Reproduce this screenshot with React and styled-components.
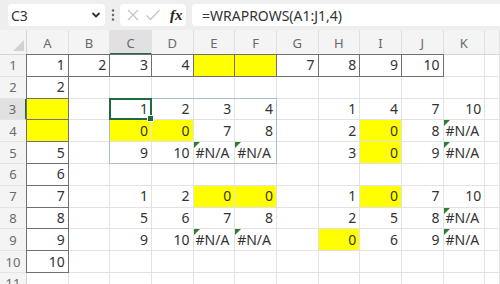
import React from 'react';
import styled, { createGlobalStyle } from 'styled-components';

const GlobalStyle = createGlobalStyle`
  html, body {
    margin: 0;
    padding: 0;
    overflow: hidden;
    background: #ffffff;
    font-family: "Noto Sans", "Liberation Sans", sans-serif;
  }
`;

const Page = styled.div`
  width: 500px;
  height: 284px;
  overflow: hidden;
  display: flex;
  flex-direction: column;
`;

const Toolbar = styled.div`
  height: 30px;
  flex: none;
  background: #eeeeee;
  display: flex;
  align-items: center;
  padding: 0 0 0 8px;
`;

const NameBox = styled.div`
  width: 97px;
  height: 22px;
  background: #ffffff;
  border-radius: 4px;
  display: flex;
  align-items: center;
  justify-content: space-between;
  padding: 0 4px 0 3px;
  box-sizing: border-box;
  font-size: 14px;
  color: #333;
`;

const Dots = styled.div`
  width: 15px;
  display: flex;
  justify-content: center;
`;

const FxBox = styled.div`
  width: 66px;
  height: 22px;
  background: #ffffff;
  border-radius: 4px;
  display: flex;
  align-items: center;
  padding: 0 0 0 6px;
  box-sizing: border-box;
  gap: 5px;
  margin-right: 6px;
`;

const Fx = styled.span`
  font-family: "Liberation Serif", serif;
  font-style: italic;
  font-size: 15px;
  color: #222;
  font-weight: bold;
  margin-left: 4px;
`;

const FormulaBox = styled.div`
  flex: 1;
  height: 22px;
  background: #ffffff;
  border-radius: 4px 0 0 4px;
  display: flex;
  align-items: center;
  padding-left: 10px;
  font-size: 14px;
  color: #333;
`;

const Sheet = styled.div`
  display: grid;
  grid-template-columns: 27px repeat(11, 41.67px) 1fr;
  grid-template-rows: 25px repeat(11, 21.8px);
  background: #fff;
`;

const Corner = styled.div`
  grid-row: 1;
  grid-column: 1;
  background: #f4f4f4;
  border-bottom: 1px solid #d4d4d4;
  border-right: 1px solid #d4d4d4;
  box-sizing: border-box;
  display: flex;
  align-items: flex-end;
  justify-content: flex-end;
  padding: 0 2px 3px 0;
`;

const ColHead = styled.div`
  grid-row: 1;
  grid-column: ${p => p.$col};
  background: ${p => (p.$active ? '#e1e1e1' : '#f4f4f4')};
  border-right: 1px solid #e0e0e0;
  border-bottom: ${p => (p.$active ? '2px solid #1e6b41' : '1px solid #d4d4d4')};
  box-sizing: border-box;
  display: flex;
  align-items: center;
  justify-content: center;
  font-size: 13px;
  color: #6a6a6a;
  padding-top: 2px;
`;

const RowHead = styled.div`
  grid-row: ${p => p.$row};
  grid-column: 1;
  background: ${p => (p.$active ? '#e1e1e1' : '#f4f4f4')};
  border-right: ${p => (p.$active ? '2px solid #1e6b41' : '1px solid #d4d4d4')};
  border-bottom: 1px solid #e4e4e4;
  box-sizing: border-box;
  display: flex;
  align-items: center;
  justify-content: center;
  font-size: 13px;
  color: #6a6a6a;
`;

const Cell = styled.div`
  grid-row: ${p => p.$row};
  grid-column: ${p => p.$col};
  position: relative;
  background: ${p => (p.$yellow ? '#ffff00' : '#ffffff')};
  border-right: 1px solid #e3e3e3;
  border-bottom: 1px solid #e3e3e3;
  box-sizing: border-box;
  display: flex;
  align-items: center;
  justify-content: ${p => (p.$error ? 'center' : 'flex-end')};
  padding: 0 3px 1px 0;
  font-size: 14px;
  color: #333;

  &::after {
    content: '';
    display: ${p => (p.$boxed ? 'block' : 'none')};
    position: absolute;
    top: -1px;
    left: -1px;
    right: -1px;
    bottom: -1px;
    border: 1px solid #707070;
    pointer-events: none;
    z-index: 1;
  }
`;

const Flag = styled.span`
  position: absolute;
  top: 0;
  left: 0;
  width: 0;
  height: 0;
  border-top: 6px solid #2e7d32;
  border-right: 6px solid transparent;
`;

const SpillRange = styled.div`
  grid-row: 4 / 7;
  grid-column: 4 / 8;
  border: 1px solid #a9bdd6;
  margin: -1px 0 0 -1px;
  pointer-events: none;
  z-index: 2;
`;

const Selection = styled.div`
  grid-row: 4 / 5;
  grid-column: 4 / 5;
  position: relative;
  border: 2px solid #1e6b41;
  margin: -1px 0 0 -1px;
  z-index: 3;
  pointer-events: none;

  &::after {
    content: '';
    position: absolute;
    right: -4px;
    bottom: -4px;
    width: 5px;
    height: 5px;
    background: #1e6b41;
    border: 1px solid #fff;
  }
`;

const cols = ['A', 'B', 'C', 'D', 'E', 'F', 'G', 'H', 'I', 'J', 'K', ''];

// cell values: v = value, y = yellow, b = boxed border, e = error with flag
const data = {
  1: { A: { v: 1, b: 1 }, B: { v: 2, b: 1 }, C: { v: 3, b: 1 }, D: { v: 4, b: 1 }, E: { y: 1, b: 1 }, F: { y: 1, b: 1 }, G: { v: 7, b: 1 }, H: { v: 8, b: 1 }, I: { v: 9, b: 1 }, J: { v: 10, b: 1 } },
  2: { A: { v: 2, b: 1 } },
  3: { A: { y: 1, b: 1 }, C: { v: 1 }, D: { v: 2 }, E: { v: 3 }, F: { v: 4 }, H: { v: 1 }, I: { v: 4 }, J: { v: 7 }, K: { v: 10 } },
  4: { A: { y: 1, b: 1 }, C: { v: 0, y: 1 }, D: { v: 0, y: 1 }, E: { v: 7 }, F: { v: 8 }, H: { v: 2 }, I: { v: 0, y: 1 }, J: { v: 8 }, K: { v: '#N/A', e: 1 } },
  5: { A: { v: 5, b: 1 }, C: { v: 9 }, D: { v: 10 }, E: { v: '#N/A', e: 1 }, F: { v: '#N/A', e: 1 }, H: { v: 3 }, I: { v: 0, y: 1 }, J: { v: 9 }, K: { v: '#N/A', e: 1 } },
  6: { A: { v: 6, b: 1 } },
  7: { A: { v: 7, b: 1 }, C: { v: 1 }, D: { v: 2 }, E: { v: 0, y: 1 }, F: { v: 0, y: 1 }, H: { v: 1 }, I: { v: 0, y: 1 }, J: { v: 7 }, K: { v: 10 } },
  8: { A: { v: 8, b: 1 }, C: { v: 5 }, D: { v: 6 }, E: { v: 7 }, F: { v: 8 }, H: { v: 2 }, I: { v: 5 }, J: { v: 8 }, K: { v: '#N/A', e: 1 } },
  9: { A: { v: 9, b: 1 }, C: { v: 9 }, D: { v: 10 }, E: { v: '#N/A', e: 1 }, F: { v: '#N/A', e: 1 }, H: { v: 0, y: 1 }, I: { v: 6 }, J: { v: 9 }, K: { v: '#N/A', e: 1 } },
  10: { A: { v: 10, b: 1 } },
  11: {},
};

const Chevron = () => (
  <svg width="10" height="8" viewBox="0 0 10 8">
    <path d="M2 2.5 L5 5.5 L8 2.5" fill="none" stroke="#333" strokeWidth="1.8" strokeLinecap="round" strokeLinejoin="round" />
  </svg>
);

const VDots = () => (
  <svg width="4" height="14" viewBox="0 0 4 14">
    <circle cx="2" cy="2.5" r="1.2" fill="#666" />
    <circle cx="2" cy="7" r="1.2" fill="#666" />
    <circle cx="2" cy="11.5" r="1.2" fill="#666" />
  </svg>
);

const Cross = () => (
  <svg width="14" height="14" viewBox="0 0 14 14">
    <path d="M2 2 L12 12 M12 2 L2 12" stroke="#c4c4c4" strokeWidth="1.3" fill="none" />
  </svg>
);

const Check = () => (
  <svg width="16" height="14" viewBox="0 0 16 14">
    <path d="M1.5 7.5 L5.5 11.5 L14.5 2" stroke="#c4c4c4" strokeWidth="1.3" fill="none" />
  </svg>
);

const App = () => {
  return (
    <Page>
      <GlobalStyle />
      <Toolbar>
        <NameBox>
          C3
          <Chevron />
        </NameBox>
        <Dots>
          <VDots />
        </Dots>
        <FxBox>
          <Cross />
          <Check />
          <Fx>fx</Fx>
        </FxBox>
        <FormulaBox>=WRAPROWS(A1:J1,4)</FormulaBox>
      </Toolbar>
      <Sheet>
        <Corner>
          <svg width="11" height="11" viewBox="0 0 11 11">
            <path d="M11 0 L11 11 L0 11 Z" fill="#d2d2d2" />
          </svg>
        </Corner>
        {cols.map((c, i) => (
          <ColHead key={'h' + i} $col={i + 2} $active={c === 'C'}>{c}</ColHead>
        ))}
        {Object.keys(data).map(r => (
          <React.Fragment key={r}>
            <RowHead $row={Number(r) + 1} $active={r === '3'}>{r}</RowHead>
            {cols.map((c, i) => {
              const d = data[r][c] || {};
              return (
                <Cell key={r + '-' + i} $row={Number(r) + 1} $col={i + 2} $yellow={d.y} $boxed={d.b} $error={d.e}>
                  {d.e && <Flag />}
                  {d.v}
                </Cell>
              );
            })}
          </React.Fragment>
        ))}
        <SpillRange />
        <Selection />
      </Sheet>
    </Page>
  );
};

export default App;
